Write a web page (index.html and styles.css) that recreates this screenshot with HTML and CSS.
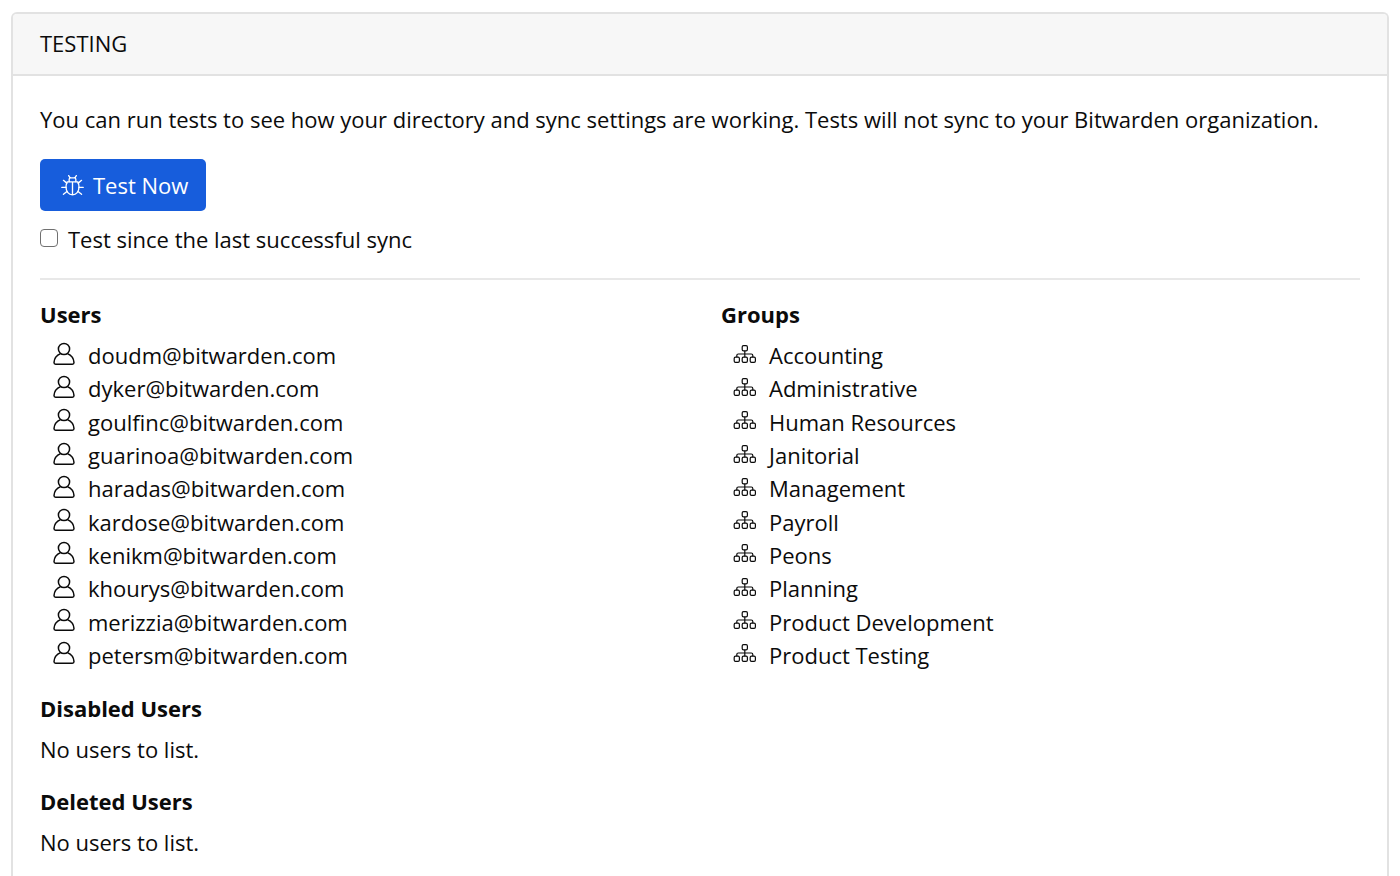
FILE: index.html
```html
<!DOCTYPE html>
<html lang="en">
<head>
<meta charset="utf-8">
<title>Testing</title>
<link rel="stylesheet" href="styles.css">
</head>
<body>
<svg class="sprite" aria-hidden="true">
  <symbol id="user" viewBox="0 0 22 24">
    <circle cx="11" cy="7" r="5.6"/>
    <path d="M7.6 11.6C3.6 13.2 1.2 16.6 1 20.6c0 1 .6 1.6 1.6 1.6h16.8c1 0 1.6-.6 1.6-1.6-.2-4-2.600-7.400-6.600-9"/>
  </symbol>
  <symbol id="sitemap" viewBox="0 0 24 20">
    <rect x="9.200" y="1.600" width="5.200" height="5.200" rx="1.300"/>
    <path d="M11.800 6.800v6.400M3.800 13.200v-1.700q0-1.500 1.500-1.500h13q1.500 0 1.500 1.500v1.700"/>
    <rect x="1.200" y="13.200" width="5.200" height="5.200" rx="1.300"/>
    <rect x="9.200" y="13.200" width="5.200" height="5.200" rx="1.300"/>
    <rect x="17.200" y="13.200" width="5.200" height="5.200" rx="1.300"/>
  </symbol>
</svg>
<main class="card">
  <h1 class="card-header">TESTING</h1>
  <div class="card-body">
    <p class="intro">You can run tests to see how your directory and sync settings are working. Tests will not sync to your Bitwarden organization.</p>
    <button type="button" class="btn">
      <svg class="bug" viewBox="0 0 24 22" aria-hidden="true">
        <path d="M6.500 7.200h11c.9 1.700 1.300 3.500 1.300 5.400 0 4.800-2.800 8.200-6.800 8.200s-6.800-3.400-6.800-8.200c0-1.900.4-3.700 1.300-5.400zM12 7.200v13.600"/>
        <path d="M8.500 7V4.500q0-1.500 1.500-1.500h4q1.500 0 1.500 1.500V7M9.500 3 8 .7M14.500 3 16 .7"/>
        <path d="M6 8.500 2.500 5.600M5.200 13H.8M6.200 17.200 2.500 20.200M18 8.500l3.500-2.900M18.800 13h4.400M17.800 17.200l3.700 3"/>
      </svg>
      Test Now
    </button>
    <div class="check">
      <input type="checkbox" id="since">
      <label for="since">Test since the last successful sync</label>
    </div>
    <hr class="rule">
    <div class="columns">
      <section>
        <h2 class="title">Users</h2>
        <ul class="list">
          <li class="item"><svg class="icon user"><use href="#user"/></svg>doudm@bitwarden.com</li>
          <li class="item"><svg class="icon user"><use href="#user"/></svg>dyker@bitwarden.com</li>
          <li class="item"><svg class="icon user"><use href="#user"/></svg>goulfinc@bitwarden.com</li>
          <li class="item"><svg class="icon user"><use href="#user"/></svg>guarinoa@bitwarden.com</li>
          <li class="item"><svg class="icon user"><use href="#user"/></svg>haradas@bitwarden.com</li>
          <li class="item"><svg class="icon user"><use href="#user"/></svg>kardose@bitwarden.com</li>
          <li class="item"><svg class="icon user"><use href="#user"/></svg>kenikm@bitwarden.com</li>
          <li class="item"><svg class="icon user"><use href="#user"/></svg>khourys@bitwarden.com</li>
          <li class="item"><svg class="icon user"><use href="#user"/></svg>merizzia@bitwarden.com</li>
          <li class="item"><svg class="icon user"><use href="#user"/></svg>petersm@bitwarden.com</li>
        </ul>
        <h2 class="title">Disabled Users</h2>
        <p class="empty">No users to list.</p>
        <h2 class="title">Deleted Users</h2>
        <p class="empty">No users to list.</p>
      </section>
      <section>
        <h2 class="title">Groups</h2>
        <ul class="list">
          <li class="item"><svg class="icon sitemap"><use href="#sitemap"/></svg>Accounting</li>
          <li class="item"><svg class="icon sitemap"><use href="#sitemap"/></svg>Administrative</li>
          <li class="item"><svg class="icon sitemap"><use href="#sitemap"/></svg>Human Resources</li>
          <li class="item"><svg class="icon sitemap"><use href="#sitemap"/></svg>Janitorial</li>
          <li class="item"><svg class="icon sitemap"><use href="#sitemap"/></svg>Management</li>
          <li class="item"><svg class="icon sitemap"><use href="#sitemap"/></svg>Payroll</li>
          <li class="item"><svg class="icon sitemap"><use href="#sitemap"/></svg>Peons</li>
          <li class="item"><svg class="icon sitemap"><use href="#sitemap"/></svg>Planning</li>
          <li class="item"><svg class="icon sitemap"><use href="#sitemap"/></svg>Product Development</li>
          <li class="item"><svg class="icon sitemap"><use href="#sitemap"/></svg>Product Testing</li>
        </ul>
      </section>
    </div>
  </div>
</main>
</body>
</html>
```
FILE: styles.css
```css
* { box-sizing: border-box; }
body {
  margin: 0;
  padding: 12px 11px 0;
  background: #fff;
  color: #0b0b0b;
  font: 22px/33px "Open Sans", "Noto Sans", sans-serif;
}
h1, h2, p, ul { margin: 0; padding: 0; }
.sprite { display: none; }
.card {
  border: 2px solid #e2e2e2;
  border-bottom: 0;
  border-radius: 6px 6px 0 0;
}
.card-header {
  padding: 13px 27px 14px;
  background: #f7f7f7;
  border-bottom: 2px solid #e2e2e2;
  border-radius: 4px 4px 0 0;
  font-size: 22px;
  font-weight: 400;
}
.card-body { padding: 27px 27px 32px; }
.intro { margin-bottom: 23px; }
.btn {
  display: flex;
  align-items: center;
  gap: 9px;
  height: 52px;
  padding: 0 18px 0 21px;
  border: 0;
  border-radius: 5px;
  background: #175ddc;
  color: #fff;
  font: inherit;
  font-weight: 500;
}
.bug {
  width: 23px;
  height: 21px;
  fill: none;
  stroke: currentColor;
  stroke-width: 1.400;
  stroke-linecap: round;
}
.check {
  display: flex;
  align-items: center;
  gap: 10px;
  margin-top: 12px;
}
.check input {
  appearance: none;
  width: 18px;
  height: 18px;
  margin: 0 0 3px;
  border: 1px solid #707070;
  border-radius: 4px;
  background: #fff;
}
.check input:checked { background: #175ddc; }
.rule {
  height: 2px;
  margin: 22px 0 18px;
  border: 0;
  background: #e8e8e8;
}
.columns {
  display: grid;
  grid-template-columns: 1fr 1fr;
  gap: 42px;
}
.title {
  margin-bottom: 8px;
  font-size: 22px;
  font-weight: 700;
}
.list {
  display: grid;
  min-height: 333px;
  margin-bottom: 20px;
  list-style: none;
}
.item {
  display: flex;
  align-items: center;
  gap: 12px;
  padding-left: 12px;
}
.icon {
  flex: none;
  width: 24px;
  height: 24px;
  margin-bottom: 4px;
  fill: none;
  stroke: currentColor;
}
.user { stroke-width: 1.500; }
.sitemap { height: 20px; stroke-width: 1.200; }
.empty { margin-bottom: 19px; }
```
